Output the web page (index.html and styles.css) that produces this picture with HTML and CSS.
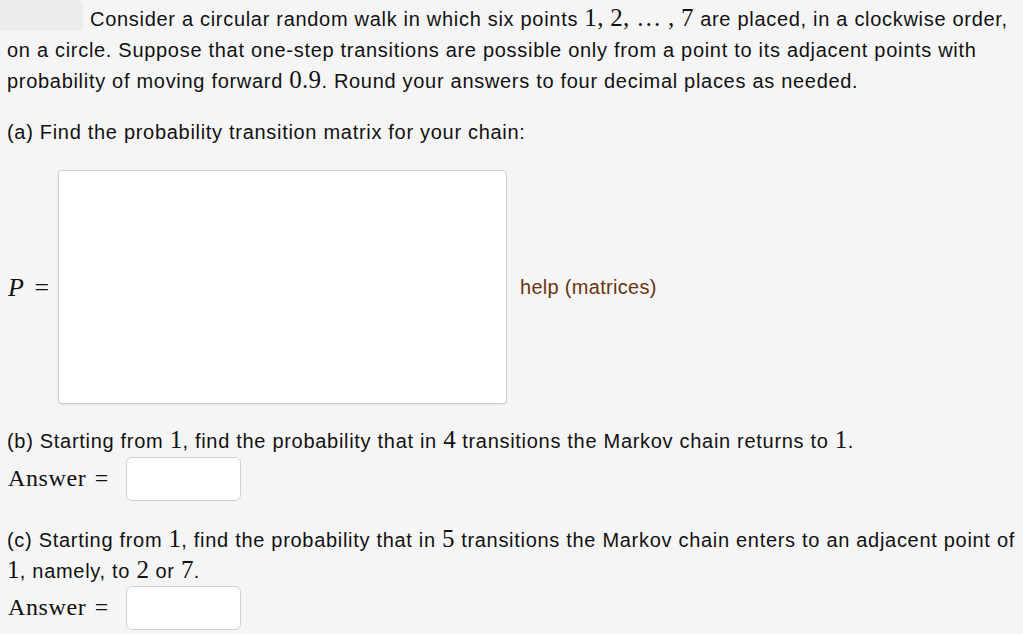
FILE: index.html
```html
<!DOCTYPE html>
<html>
<head>
<meta charset="utf-8">
<link rel="stylesheet" href="styles.css">
</head>
<body>
<div class="page">
  <div class="blob"></div>
  <p class="intro">Consider a circular random walk in which six points <span class="m">1, 2, … , 7</span> are placed, in a clockwise order,<br>on a circle. Suppose that one-step transitions are possible only from a point to its adjacent points with<br>probability of moving forward <span class="m">0.9</span>. Round your answers to four decimal places as needed.</p>

  <p class="part-a">(a) Find the probability transition matrix for your chain:</p>

  <div class="matrix-row">
    <span class="mlabel"><i>P</i> =</span>
    <div class="matrix-box"></div>
    <a class="help">help (matrices)</a>
  </div>

  <p class="part">(b) Starting from <span class="m">1</span>, find the probability that in <span class="m">4</span> transitions the Markov chain returns to <span class="m">1</span>.</p>
  <div class="answer-row">
    <span class="alabel">Answer =</span>
    <div class="answer-box"></div>
  </div>

  <p class="part part-c">(c) Starting from <span class="m">1</span>, find the probability that in <span class="m">5</span> transitions the Markov chain enters to an adjacent point of<br><span class="m">1</span>, namely, to <span class="m">2</span> or <span class="m">7</span>.</p>
  <div class="answer-row answer-c">
    <span class="alabel">Answer =</span>
    <div class="answer-box"></div>
  </div>
</div>
</body>
</html>
```

FILE: styles.css
```css
html, body {
  margin: 0;
  padding: 0;
  background: #f5f5f5;
}
body {
  font-family: "Liberation Sans", Arial, sans-serif;
  font-size: 20px;
  letter-spacing: 0.7px;
  color: #111;
  line-height: 31px;
}
.page {
  padding: 4px 0 0 7px;
  white-space: nowrap;
  overflow: hidden;
}
.blob {
  float: left;
  width: 83px;
  height: 31px;
  margin: -4px 7px 0 -7px;
  background: #ececec;
  border-radius: 0 6px 6px 0;
}
p {
  margin: 0;
}
.m {
  font-family: "Liberation Serif", "Times New Roman", serif;
  font-size: 25px;
  letter-spacing: 0.3px;
  line-height: 1;
}
.part-a {
  margin-top: 20px;
}
.matrix-row {
  display: flex;
  align-items: center;
  margin-top: 22px;
}
.mlabel {
  font-family: "Liberation Serif", "Times New Roman", serif;
  font-size: 26px;
  width: 50px;
  padding-left: 1px;
  letter-spacing: 0;
  word-spacing: 4px;
}
.matrix-box {
  width: 447px;
  height: 232px;
  background: #fff;
  border: 1px solid #cfcfcf;
  border-radius: 4px;
  box-shadow: 0 1px 2px rgba(0,0,0,0.08);
}
.help {
  margin-left: 13px;
  color: #6b3410;
  font-size: 20px;
  letter-spacing: 0.3px;
}
.part {
  margin-top: 22px;
}
.part-c {
  margin-top: 24px;
}
.answer-row {
  display: flex;
  align-items: center;
  height: 44px;
}
.answer-c {
  margin-top: -1px;
}
.alabel {
  font-family: "Liberation Serif", "Times New Roman", serif;
  font-size: 24px;
  line-height: 1;
  letter-spacing: 0.6px;
  word-spacing: 2px;
  width: 118px;
  padding-left: 1px;
  margin-top: -3px;
}
.answer-box {
  width: 113px;
  height: 42px;
  background: #fff;
  border: 1px solid #cfcfcf;
  border-radius: 6px;
}
```
